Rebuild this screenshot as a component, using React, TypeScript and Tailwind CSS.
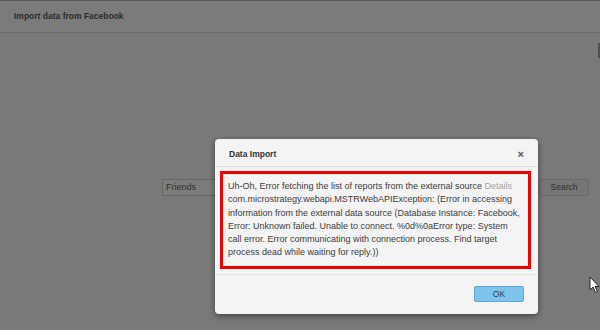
import React from "react";

const font = { fontFamily: '"Liberation Sans", Arial, sans-serif' };

function Cursor() {
  return (
    <svg width="12" height="18" viewBox="0 0 12 18" className="absolute left-[589px] top-[276px]">
      <path d="M1 1 L1 14 L4 11 L6.5 16.5 L8.5 15.5 L6 10.5 L10 10.5 Z" fill="#fff" stroke="#222" strokeWidth="1" strokeLinejoin="round" />
    </svg>
  );
}

export default function App() {
  return (
    <div className="relative w-[600px] h-[330px] overflow-hidden bg-[#797979]" style={font}>
      {/* page behind the overlay */}
      <div className="h-[1px] bg-[#5c5a55]" />
      <div className="h-[32px] flex items-center pl-[14px] border-b border-[#6c6c6c] bg-[#7b7b7b]">
        <span className="text-[8.5px] font-bold text-[#2c2c2c]">Import data from Facebook</span>
      </div>
      <div className="absolute right-0 top-[43px] w-[2px] h-[15px] bg-[#4e4e4e]" />

      <div className="flex items-center pt-[146px] pl-[162px]">
        <div className="w-[360px] h-[17px] border border-[#666] bg-[#7c7c7c] flex items-center pl-[3px]">
          <span className="text-[9px] text-[#2e2e2e]">Friends</span>
        </div>
        <div className="ml-[17px] w-[50px] h-[17px] rounded-[2px] border border-[#6a6a6a] bg-[#767676] flex items-center justify-center">
          <span className="text-[8.5px] text-[#2e2e2e]">Search</span>
        </div>
      </div>

      {/* dialog */}
      <div className="absolute left-[215px] top-[139px] w-[323px] h-[175px] rounded-[4px] bg-[#f4f4f4] shadow-[0_2px_6px_rgba(0,0,0,0.45)] flex flex-col">
        <div className="h-[28px] flex items-center justify-between pl-[14px] pr-[14px] pt-[3px] border-b border-[#e0e0e0]">
          <span className="text-[8.5px] font-bold text-[#333]">Data Import</span>
          <span className="text-[11px] font-bold text-[#555] leading-none">×</span>
        </div>
        <div className="px-[5px] pt-[4px] pb-[5px] pr-[7px]">
          <div className="border-[3px] border-[#f00000] pl-[5px] pt-[6px] pb-[6px] text-[9px] leading-[13.3px] text-[#3c3c3c]">
            Uh-Oh, Error fetching the list of reports from the external source <span className="text-[#a3a3a3]">Details</span>
            <br />
            com.microstrategy.webapi.MSTRWebAPIException: (Error in accessing
            <br />
            information from the external data source (Database Instance: Facebook,
            <br />
            Error: Unknown failed. Unable to connect. %0d%0aError type: System
            <br />
            call error. Error communicating with connection process. Find target
            <br />
            process dead while waiting for reply.))
          </div>
        </div>
        <div className="flex-1 border-t border-[#e2e2e2] flex items-center justify-end pr-[14px]">
          <div className="w-[50px] h-[16px] rounded-[2px] border border-[#5aa7d8] bg-[#7ec4ec] flex items-center justify-center">
            <span className="text-[8.5px] text-[#2f3a44]">OK</span>
          </div>
        </div>
      </div>

      <Cursor />
    </div>
  );
}
